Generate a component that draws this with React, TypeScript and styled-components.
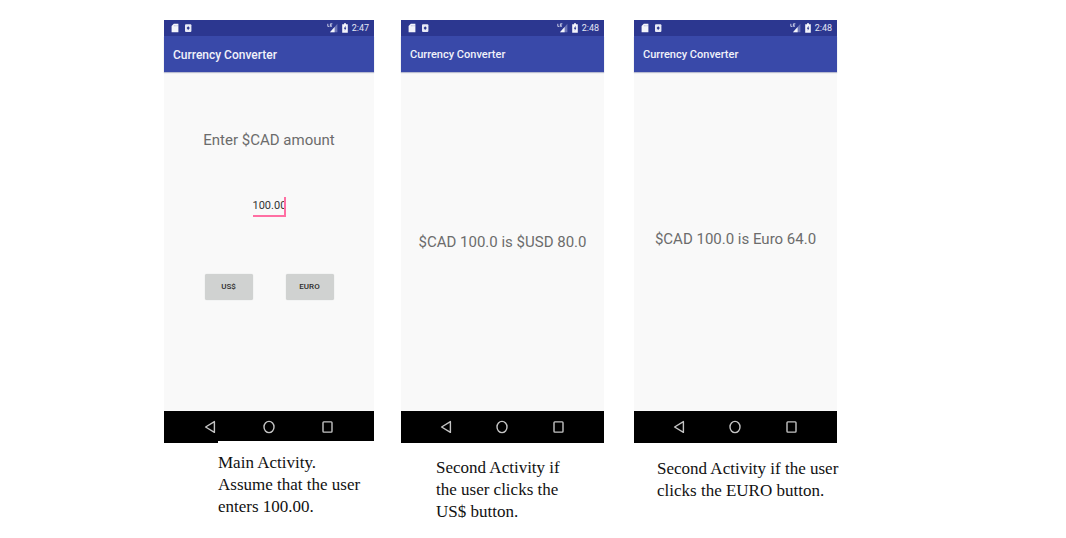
import React from "react";
import styled, { createGlobalStyle } from "styled-components";

const GlobalStyle = createGlobalStyle`
  * { box-sizing: border-box; }
  body {
    margin: 0;
    background: #fff;
    font-family: Roboto, "Liberation Sans", sans-serif;
  }
`;

const Page = styled.main`
  display: grid;
  grid-template-columns: 164fr 210fr 27fr 203fr 30fr 203fr 229fr;
  align-items: start;
  padding: 20px 0 12px;
`;

const Figure = styled.figure<{ $column: number }>`
  grid-column: ${(p) => p.$column};
  min-width: 0;
  margin: 0;
`;

const Phone = styled.section`
  display: flex;
  flex-direction: column;
  background: #f9f9f9;
`;

const StatusBar = styled.div`
  display: flex;
  align-items: center;
  justify-content: space-between;
  height: 16px;
  padding: 0 5px 0 7px;
  background: #2c3790;
  color: #e3e5f4;
  font-size: 9px;
  line-height: 16px;
`;

const StatusGroup = styled.div<{ $gap: number }>`
  display: flex;
  align-items: center;
  gap: ${(p) => p.$gap}px;
`;

const AppBar = styled.header`
  height: 36px;
  padding: 0 9px;
  background: #3949a9;
  box-shadow: 0 1px 1px #b9bcd0;
`;

const AppTitle = styled.h1<{ $compact?: boolean }>`
  margin: 0;
  color: #f1f2fa;
  font-size: ${(p) => (p.$compact ? 11 : 12)}px;
  font-weight: 500;
  line-height: 38px;
  white-space: nowrap;
`;

const Screen = styled.div<{ $top: number }>`
  display: flex;
  flex-direction: column;
  align-items: center;
  height: 339px;
  padding-top: ${(p) => p.$top}px;
`;

const Message = styled.p`
  margin: 0;
  color: #6c6c6c;
  font-size: 15px;
  line-height: 20px;
  white-space: nowrap;
`;

const PromptLabel = styled(Message).attrs({ as: "label" })<{ htmlFor: string }>``;

const AmountField = styled.div`
  position: relative;
  display: flex;
  width: 33px;
  height: 20px;
  margin-top: 47px;
  border-bottom: 2px solid #ff6fa3;
`;

const AmountInput = styled.input`
  flex: 1;
  min-width: 0;
  padding: 0;
  border: 0;
  outline: 0;
  background: transparent;
  color: #333;
  font: 11px/18px Roboto, "Liberation Sans", sans-serif;
`;

const Caret = styled.span`
  position: absolute;
  top: 0;
  right: 0;
  bottom: 0;
  width: 2px;
  background: #ff6fa3;
`;

const ButtonRow = styled.div`
  display: flex;
  gap: 33px;
  margin-top: 57px;
`;

const CurrencyButton = styled.button`
  width: 48px;
  height: 26px;
  padding: 0;
  border: 0;
  border-radius: 2px;
  background: #d0d2d1;
  box-shadow: 0 0 1px #c4c6c5;
  color: #2c2c2c;
  font: 500 8px/26px Roboto, "Liberation Sans", sans-serif;
`;

const NavBar = styled.nav`
  display: grid;
  grid-template-columns: repeat(3, 1fr);
  height: 32px;
  padding: 0 17px;
  background: #000;
`;

const NavButton = styled.button`
  display: flex;
  align-items: center;
  justify-content: center;
  padding: 0;
  border: 0;
  background: transparent;
`;

const Caption = styled.figcaption<{ $indent: number; $top: number }>`
  margin-left: ${(p) => p.$indent}px;
  padding-top: ${(p) => p.$top}px;
  color: #111;
  font: 17px/22px "Liberation Serif", "Times New Roman", serif;
  white-space: nowrap;
`;

const OverlappingCaption = styled(Caption)`
  position: relative;
  margin-top: -2px;
  background: #fff;
`;

const Line = styled.span`
  display: block;
`;

const SdCardIcon = () => (
  <svg width="8" height="10" viewBox="0 0 8 10" aria-hidden="true">
    <path d="M2.8 .8H7.4V9.2H.6V3z" fill="#f4f5fb" />
    <path d="M3.4 2v1.4M4.8 2v1.4M6.2 2v1.4" stroke="#a9aed4" strokeWidth=".6" />
  </svg>
);

const DebugIcon = () => (
  <svg width="8" height="10" viewBox="0 0 8 10" aria-hidden="true">
    <rect x="1" y="1.2" width="6.4" height="7.8" rx="1" fill="#e9ebf6" />
    <path d="M4.2 3.2 5.8 5.1 4.2 7 2.6 5.1z" fill="#2c3790" />
  </svg>
);

const SignalIcon = () => (
  <svg width="11" height="10" viewBox="0 0 11 10" aria-hidden="true">
    <path d="M.8 .8v2.6h1.6M3.4 .8h2M3.4 2.1h1.6M3.4 3.4h1.4M3.4 .8v2.6" fill="none" stroke="#c3c7e4" strokeWidth="1" />
    <path d="M10.4 .8V9.2H3z" fill="#6d76b8" />
    <path d="M7.6 4V9.2H3z" fill="#f4f5fb" />
  </svg>
);

const BatteryIcon = () => (
  <svg width="6" height="10" viewBox="0 0 6 10" aria-hidden="true">
    <path d="M2 .3h2v.9h1.8v8.5H.2V1.2H2z" fill="#f4f5fb" />
    <path d="M3.5 2.8 1.8 5.8h1v2l1.6-3h-.9z" fill="#2c3790" />
  </svg>
);

const BackIcon = () => (
  <svg width="12" height="14" viewBox="0 0 12 14" aria-hidden="true">
    <path d="M10.4 1.6v10.8L1.6 7z" fill="none" stroke="#c4c4c4" strokeWidth="1.4" strokeLinejoin="round" />
  </svg>
);

const HomeIcon = () => (
  <svg width="12" height="14" viewBox="0 0 12 14" aria-hidden="true">
    <ellipse cx="6" cy="7" rx="5" ry="5.6" fill="none" stroke="#c4c4c4" strokeWidth="1.4" />
  </svg>
);

const RecentsIcon = () => (
  <svg width="12" height="14" viewBox="0 0 12 14" aria-hidden="true">
    <rect x="1" y="1.9" width="9" height="10.2" rx=".8" fill="none" stroke="#c4c4c4" strokeWidth="1.4" />
  </svg>
);

type DeviceProps = {
  time: string;
  top: number;
  compact?: boolean;
  children: React.ReactNode;
};

const Device = ({ time, top, compact, children }: DeviceProps) => (
  <Phone>
    <StatusBar>
      <StatusGroup $gap={5}>
        <SdCardIcon />
        <DebugIcon />
      </StatusGroup>
      <StatusGroup $gap={4}>
        <SignalIcon />
        <BatteryIcon />
        <span>{time}</span>
      </StatusGroup>
    </StatusBar>
    <AppBar>
      <AppTitle $compact={compact}>Currency Converter</AppTitle>
    </AppBar>
    <Screen $top={top}>{children}</Screen>
    <NavBar>
      <NavButton type="button" aria-label="Back"><BackIcon /></NavButton>
      <NavButton type="button" aria-label="Home"><HomeIcon /></NavButton>
      <NavButton type="button" aria-label="Recent apps"><RecentsIcon /></NavButton>
    </NavBar>
  </Phone>
);

export default function App() {
  return (
    <>
      <GlobalStyle />
      <Page>
        <Figure $column={2}>
          <Device time="2:47" top={58}>
            <PromptLabel htmlFor="amount">Enter $CAD amount</PromptLabel>
            <AmountField>
              <AmountInput id="amount" type="text" inputMode="decimal" defaultValue="100.00" />
              <Caret />
            </AmountField>
            <ButtonRow>
              <CurrencyButton type="button">US$</CurrencyButton>
              <CurrencyButton type="button">EURO</CurrencyButton>
            </ButtonRow>
          </Device>
          <OverlappingCaption $indent={54} $top={11}>
            <Line>Main Activity.</Line>
            <Line>Assume that the user</Line>
            <Line>enters 100.00.</Line>
          </OverlappingCaption>
        </Figure>
        <Figure $column={4}>
          <Device time="2:48" top={160} compact>
            <Message>$CAD 100.0 is $USD 80.0</Message>
          </Device>
          <Caption $indent={35} $top={14}>
            <Line>Second Activity if</Line>
            <Line>the user clicks the</Line>
            <Line>US$ button.</Line>
          </Caption>
        </Figure>
        <Figure $column={6}>
          <Device time="2:48" top={157} compact>
            <Message>$CAD 100.0 is Euro 64.0</Message>
          </Device>
          <Caption $indent={23} $top={15}>
            <Line>Second Activity if the user</Line>
            <Line>clicks the EURO button.</Line>
          </Caption>
        </Figure>
      </Page>
    </>
  );
}
